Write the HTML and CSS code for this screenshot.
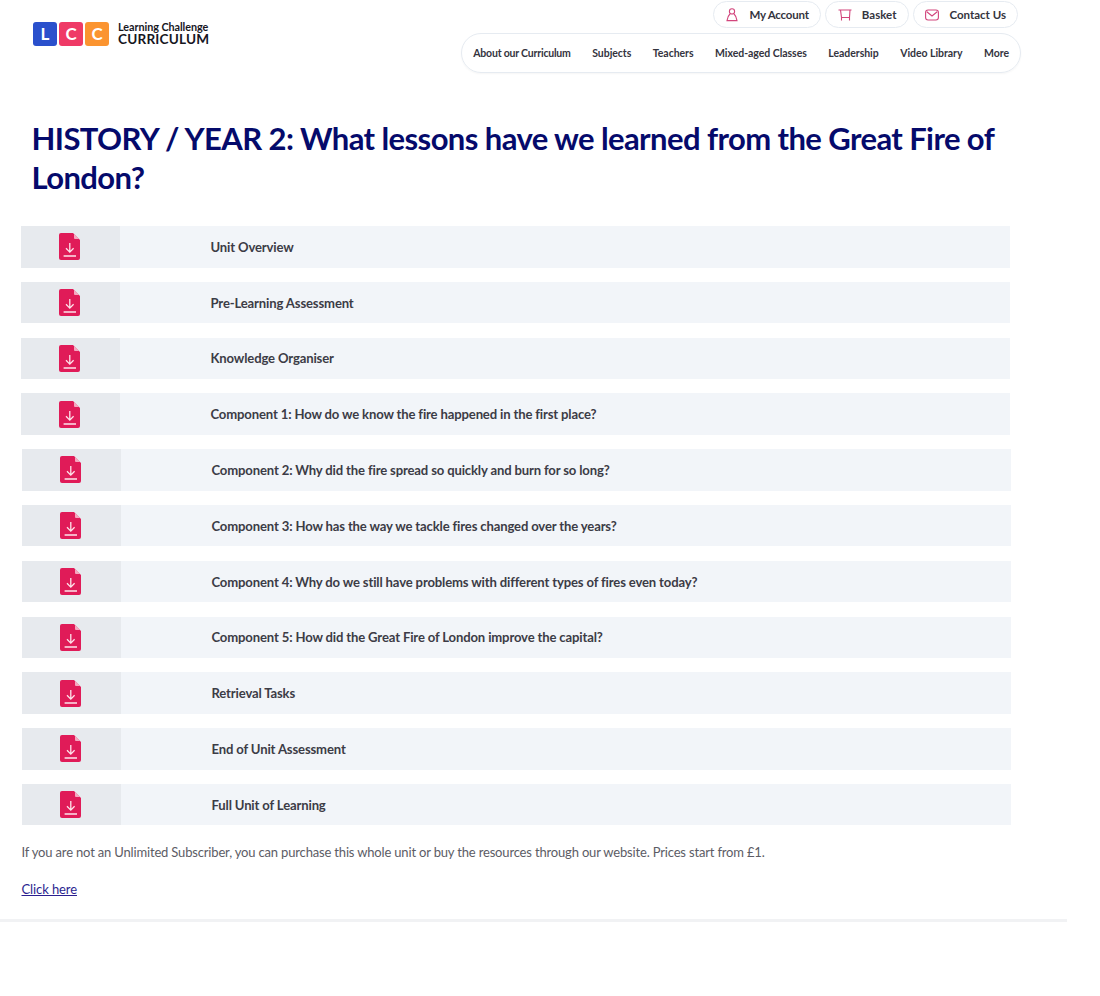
FILE: index.html
```html
<!DOCTYPE html>
<html lang="en">
<head>
<meta charset="utf-8">
<title>What lessons have we learned from the Great Fire of London?</title>
<link rel="stylesheet" href="styles.css">
</head>
<body>
<svg class="defs" width="0" height="0" aria-hidden="true">
  <symbol id="doc" viewBox="0 0 21 27">
    <path d="M2 0H14L21 7V25a2 2 0 0 1-2 2H2a2 2 0 0 1-2-2V2a2 2 0 0 1 2-2Z" fill="#e01b58"/>
    <path d="M15 .8L20.2 6H16a1 1 0 0 1-1-1Z" fill="#f4a9c0"/>
    <path d="M10.8 10V19M7 15.3L10.8 19.1L14.6 15.3M4.6 23H17" fill="none" stroke="#fde3ea" stroke-width="1.3"/>
  </symbol>
</svg>
<div class="page">
  <header class="header">
    <a class="logo" href="#">
      <span class="tile tile-blue">L</span><span class="tile tile-pink">C</span><span class="tile tile-orange">C</span>
      <span class="logo-text"><span class="logo-top">Learning Challenge</span><span class="logo-bottom">CURRICULUM</span></span>
    </a>
    <div class="navs">
      <div class="top-links">
        <a class="pill pill-account" href="#">
          <svg class="pill-icon" viewBox="0 0 14 14"><circle cx="7" cy="3.4" r="2.6"/><path d="M4.9 6C3.5 7.3 2.4 10.2 2 12.6H12C11.6 10.2 10.5 7.3 9.1 6"/></svg>My Account</a>
        <a class="pill pill-basket" href="#">
          <svg class="pill-icon" viewBox="0 0 14 14"><path d="M.5 2H13.5M2.5 2L3.5 9.5H11.5L12 2M3.5 9.5V12.5M11.5 9.5V12.5"/></svg>Basket</a>
        <a class="pill" href="#">
          <svg class="pill-icon" viewBox="0 0 14 14"><rect x=".6" y="2" width="12.8" height="10" rx="2.5"/><path d="M1.8 3.8L7 8L12.2 3.8"/></svg>Contact Us</a>
      </div>
      <nav class="main-nav">
        <a class="nav-first" href="#">About our Curriculum</a>
        <a href="#">Subjects</a>
        <a href="#">Teachers</a>
        <a href="#">Mixed-aged Classes</a>
        <a href="#">Leadership</a>
        <a href="#">Video Library</a>
        <a href="#">More</a>
      </nav>
    </div>
  </header>

  <main class="content">
    <h1 class="title">HISTORY / YEAR 2: What lessons have we learned from the Great Fire of London?</h1>
    <div class="rows">
      <a class="row" href="#"><span class="row-icon"><svg class="doc"><use href="#doc"/></svg></span><span class="row-label">Unit Overview</span></a>
      <a class="row" href="#"><span class="row-icon"><svg class="doc"><use href="#doc"/></svg></span><span class="row-label">Pre-Learning Assessment</span></a>
      <a class="row" href="#"><span class="row-icon"><svg class="doc"><use href="#doc"/></svg></span><span class="row-label">Knowledge Organiser</span></a>
      <a class="row" href="#"><span class="row-icon"><svg class="doc"><use href="#doc"/></svg></span><span class="row-label">Component 1: How do we know the fire happened in the first place?</span></a>
      <div class="rows rows-shift">
        <a class="row" href="#"><span class="row-icon"><svg class="doc"><use href="#doc"/></svg></span><span class="row-label">Component 2: Why did the fire spread so quickly and burn for so long?</span></a>
        <a class="row" href="#"><span class="row-icon"><svg class="doc"><use href="#doc"/></svg></span><span class="row-label">Component 3: How has the way we tackle fires changed over the years?</span></a>
        <a class="row" href="#"><span class="row-icon"><svg class="doc"><use href="#doc"/></svg></span><span class="row-label">Component 4: Why do we still have problems with different types of fires even today?</span></a>
        <a class="row" href="#"><span class="row-icon"><svg class="doc"><use href="#doc"/></svg></span><span class="row-label">Component 5: How did the Great Fire of London improve the capital?</span></a>
        <a class="row" href="#"><span class="row-icon"><svg class="doc"><use href="#doc"/></svg></span><span class="row-label">Retrieval Tasks</span></a>
        <a class="row" href="#"><span class="row-icon"><svg class="doc"><use href="#doc"/></svg></span><span class="row-label">End of Unit Assessment</span></a>
        <a class="row" href="#"><span class="row-icon"><svg class="doc"><use href="#doc"/></svg></span><span class="row-label">Full Unit of Learning</span></a>
      </div>
    </div>
    <p class="note">If you are not an Unlimited Subscriber, you can purchase this whole unit or buy the resources through our website. Prices start from £1.</p>
    <p class="more"><a href="#">Click here</a></p>
  </main>
  <div class="divider"></div>
</div>
</body>
</html>
```
FILE: styles.css
```css
* { box-sizing: border-box; }
html, body { margin: 0; padding: 0; background: #fff; }
body { font-family: "Lato", "Noto Sans", sans-serif; color: #3b3b45; height: 996px; overflow: hidden; }
a { color: inherit; text-decoration: none; }
.defs { position: absolute; }
.page { width: 1100px; }

.header { display: flex; justify-content: space-between; height: 73px; padding: 1px 79px 0 33px; }
.logo { display: flex; align-items: flex-start; padding-top: 21px; }
.tile { width: 24px; height: 24px; border-radius: 3px; margin-right: 2px; color: #fff; font: 700 17px/24px "Lato", sans-serif; text-align: center; }
.tile-blue { background: #2a50cc; }
.tile-pink { background: #ef3a66; }
.tile-orange { background: #fb9430; }
.logo-text { display: flex; flex-direction: column; margin: -1px 0 0 7px; color: #17171f; }
.logo-top { font-size: 10.8px; line-height: 11px; font-weight: 700; letter-spacing: -.05px; white-space: nowrap; }
.logo-bottom { font-size: 13.6px; line-height: 15px; font-weight: 700; letter-spacing: .2px; white-space: nowrap; }

.navs { display: flex; flex-direction: column; align-items: flex-end; gap: 5px; }
.top-links { display: flex; gap: 4px; margin-right: 3px; }
.pill { display: flex; align-items: center; height: 27px; padding: 0 11px; gap: 10px; border: 1px solid #e6ebf1; border-radius: 14px; font-size: 11.5px; font-weight: 700; color: #34343e; white-space: nowrap; }
.pill-account { letter-spacing: -.2px; }
.pill-basket { padding: 0 12px; }
.pill-icon { width: 14px; height: 14px; fill: none; stroke: #d2457c; stroke-width: 1.1; }
.main-nav { display: flex; gap: 21.5px; align-items: center; height: 40px; padding: 0 11px; border: 1px solid #e6ebf1; border-radius: 20px; font-size: 10.5px; letter-spacing: -.04px; font-weight: 700; color: #34343e; white-space: nowrap; box-shadow: 0 1px 2px rgba(0,0,0,.04); }
.nav-first { letter-spacing: -.2px; }

.content { padding: 0 0 0 21px; }
.title { width: 990px; margin: 46px 0 30px 10.5px; color: #050a6b; font: 700 31px/38.5px "Lato", sans-serif; letter-spacing: -.59px; }
.rows { display: flex; flex-direction: column; gap: 14.3px; width: 989px; }
.rows-shift { margin-left: 1px; }
.row { display: flex; align-items: stretch; height: 41.5px; background: #f2f5f9; }
.row-icon { display: flex; width: 99px; align-items: center; justify-content: center; padding-right: 2px; background: #e7eaee; }
.doc { width: 21px; height: 27px; display: block; }
.row-label { display: flex; align-items: center; padding-left: 90.5px; font-size: 13.1px; letter-spacing: -.15px; font-weight: 700; color: #3c3c46; white-space: nowrap; }
.note { margin: 18px 0 0 .5px; font-size: 13px; letter-spacing: -.17px; line-height: 18px; color: #5c5c65; }
.more { margin: 19px 0 0 .5px; font-size: 13px; letter-spacing: -.1px; line-height: 18px; }
.more a { color: #2b1f8f; text-decoration: underline; }
.divider { width: 1067px; height: 3px; margin-top: 21px; background: #f1f2f4; }
```
